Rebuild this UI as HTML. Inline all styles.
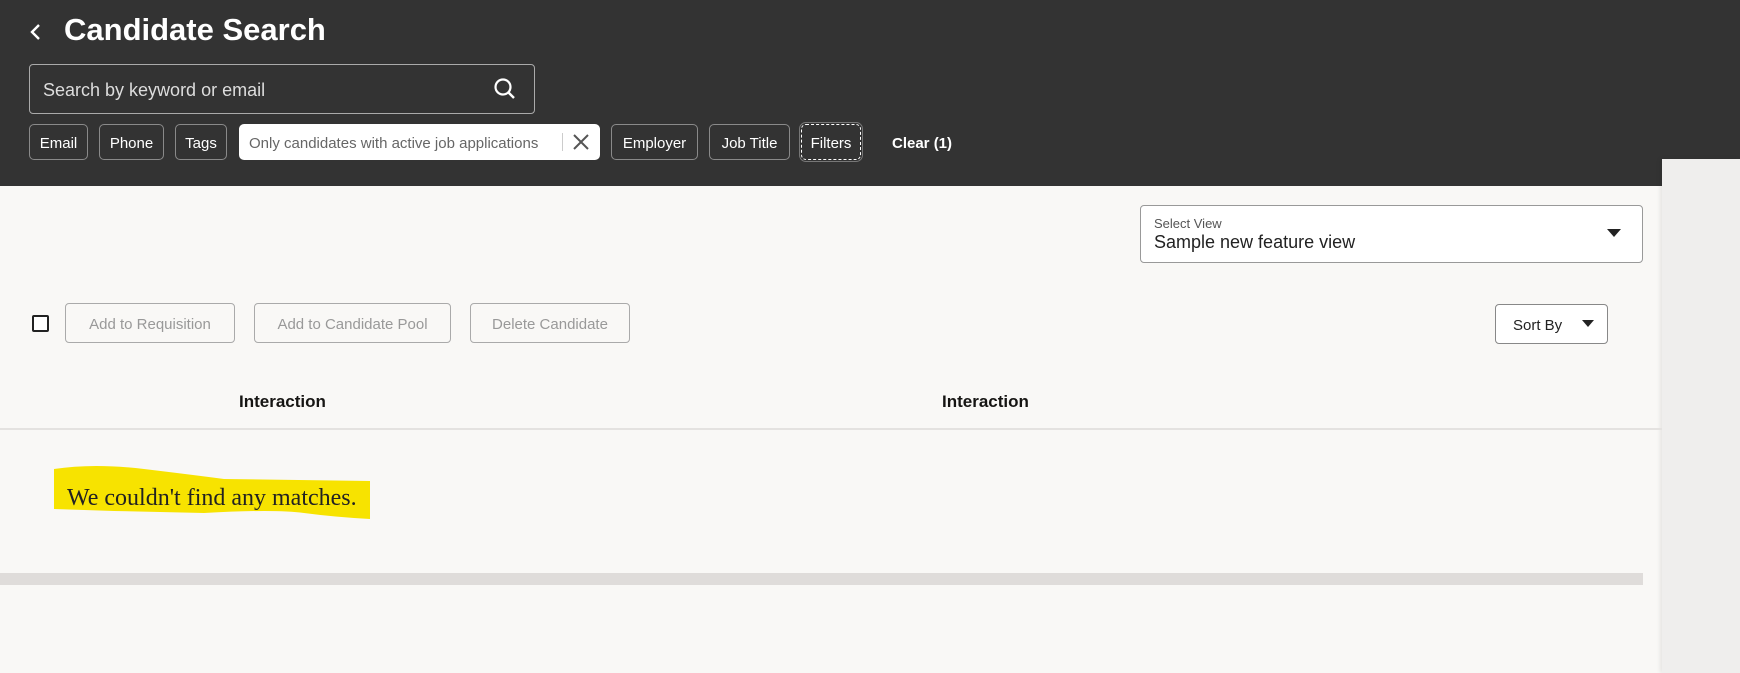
<!DOCTYPE html>
<html><head><meta charset="utf-8"><style>
*{box-sizing:border-box;margin:0;padding:0}
body{width:1740px;height:673px;overflow:hidden;background:#f9f8f6;font-family:"Liberation Sans",sans-serif;position:relative}
.hdr{position:absolute;left:0;top:0;width:1740px;height:186px;background:#333}
.abs{position:absolute}
.chip{position:absolute;top:124px;height:36px;border:1px solid #8a8a8a;border-radius:5px;color:#fff;font-size:15px;line-height:37px;text-align:center}
.btn{position:absolute;top:303px;height:40px;border:1px solid #aaa;border-radius:4px;color:#999;font-size:15px;line-height:41px;text-align:center;background:#f9f8f6}
</style></head><body>
<div class="hdr"></div>
<svg class="abs" style="left:28px;top:22px" width="16" height="20" viewBox="0 0 16 20"><path d="M11 3 L4 10 L11 17" stroke="#fff" stroke-width="2.4" fill="none"/></svg>
<div class="abs" style="left:64px;top:12px;color:#fff;font-size:31px;font-weight:bold">Candidate Search</div>
<div class="abs" style="left:29px;top:64px;width:506px;height:50px;border:1px solid #aaa;border-radius:4px"></div>
<div class="abs" style="left:43px;top:80px;color:#ddd;font-size:18px">Search by keyword or email</div>
<svg class="abs" style="left:493px;top:77px" width="24" height="24" viewBox="0 0 24 24"><circle cx="10" cy="10" r="7.5" stroke="#fff" stroke-width="2.2" fill="none"/><path d="M15.5 15.5 L21 21" stroke="#fff" stroke-width="2.4"/></svg>
<div class="chip" style="left:29px;width:59px">Email</div>
<div class="chip" style="left:99px;width:65px">Phone</div>
<div class="chip" style="left:175px;width:52px">Tags</div>
<div class="chip" style="left:239px;width:361px;background:#fff;border-color:#fff;color:#666;text-align:left;padding-left:9px">Only candidates with active job applications</div>
<div class="abs" style="left:562px;top:133px;width:1px;height:18px;background:#ccc"></div>
<svg class="abs" style="left:572px;top:133px" width="18" height="18" viewBox="0 0 18 18"><path d="M2 2 L16 16 M16 2 L2 16" stroke="#555" stroke-width="2"/></svg>
<div class="chip" style="left:611px;width:87px">Employer</div>
<div class="chip" style="left:709px;width:81px">Job Title</div>
<div class="chip" style="left:801px;width:60px;border:1px dashed #fff;outline:1px solid #777;outline-offset:1px">Filters</div>
<div class="abs" style="left:892px;top:135px;color:#fff;font-size:15px;font-weight:bold">Clear (1)</div>
<div class="abs" style="left:1662px;top:159px;width:78px;height:514px;background:#efeeed;box-shadow:-2px 0 4px rgba(0,0,0,.08)"></div>
<div class="abs" style="left:1140px;top:205px;width:503px;height:58px;border:1px solid #999;border-radius:4px;background:#fff"></div>
<div class="abs" style="left:1154px;top:216px;font-size:13px;color:#555">Select View</div>
<div class="abs" style="left:1154px;top:232px;font-size:18px;color:#222">Sample new feature view</div>
<svg class="abs" style="left:1607px;top:229px" width="14" height="9"><path d="M0 0 L14 0 L7 8Z" fill="#222"/></svg>
<div class="abs" style="left:32px;top:315px;width:17px;height:17px;border:2px solid #222;border-radius:2px;background:#fff"></div>
<div class="btn" style="left:65px;width:170px">Add to Requisition</div>
<div class="btn" style="left:254px;width:197px">Add to Candidate Pool</div>
<div class="btn" style="left:470px;width:160px">Delete Candidate</div>
<div class="btn" style="left:1495px;top:304px;width:113px;border-color:#888;color:#222;background:#fff;text-align:left;padding-left:17px">Sort By</div>
<svg class="abs" style="left:1582px;top:320px" width="12" height="7"><path d="M0 0 L12 0 L6 7Z" fill="#222"/></svg>
<div class="abs" style="left:239px;top:392px;font-size:17px;font-weight:bold;color:#161513">Interaction</div>
<div class="abs" style="left:942px;top:392px;font-size:17px;font-weight:bold;color:#161513">Interaction</div>
<div class="abs" style="left:0;top:428px;width:1662px;height:2px;background:#e4e2e0"></div>
<svg class="abs" style="left:54px;top:465px" width="318" height="56"><path d="M0 4 Q40 -2 90 4 T170 14 L316 16 L316 54 Q280 52 250 48 T150 48 L60 46 L0 44Z" fill="#f7e300"/></svg>
<div class="abs" style="left:67px;top:485px;font-family:'Liberation Serif',serif;font-size:24px;color:#222">We couldn't find any matches.</div>
<div class="abs" style="left:0;top:573px;width:1643px;height:12px;background:#dfdcda"></div>
</body></html>
